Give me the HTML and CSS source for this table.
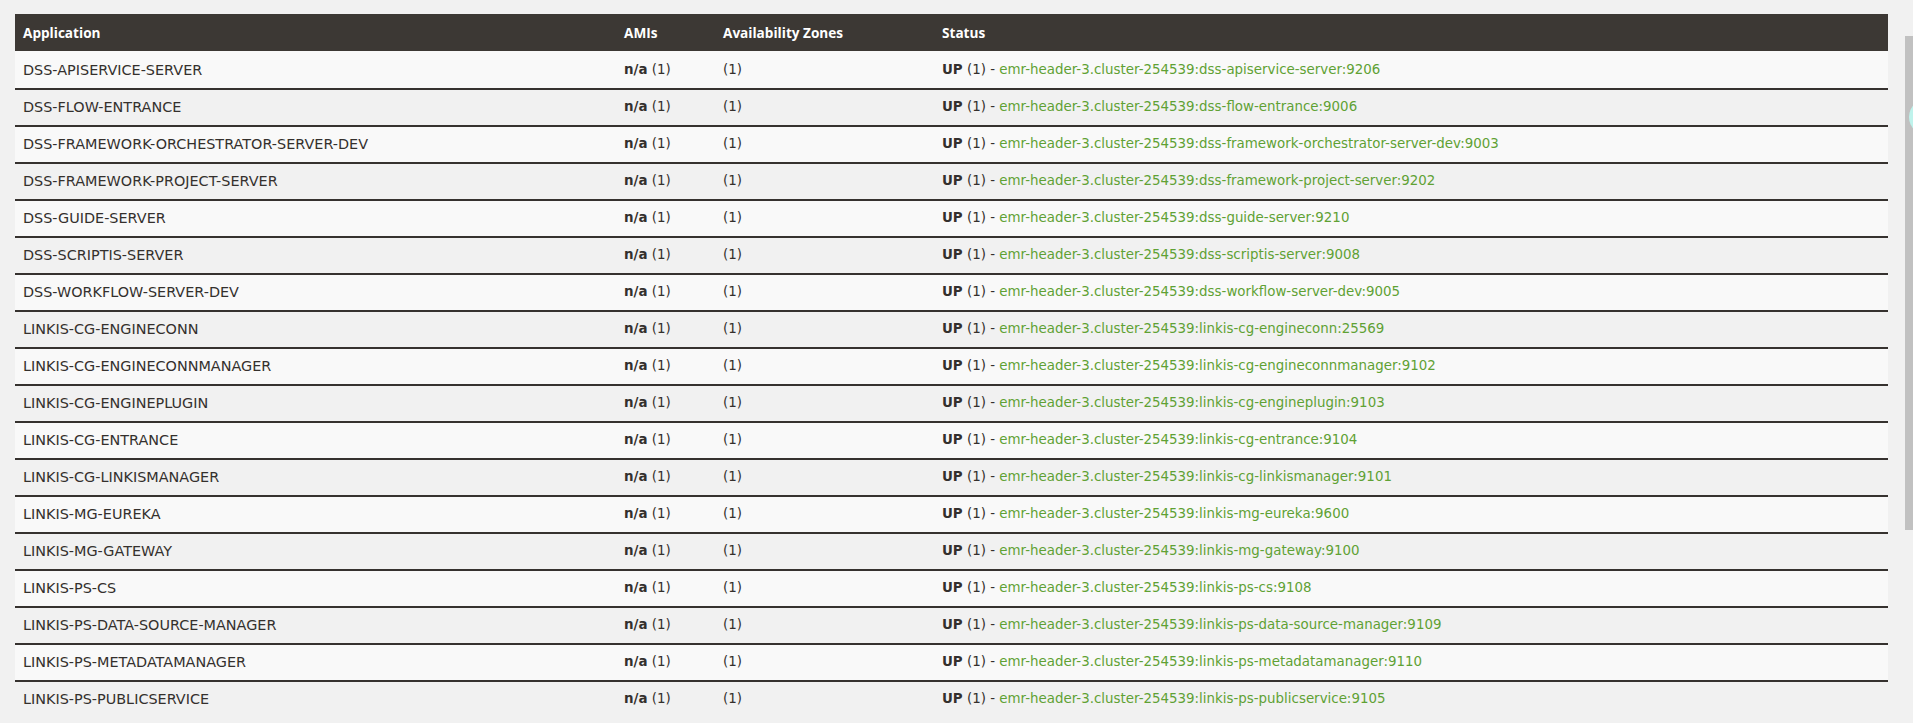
FILE: index.html
```html
<!DOCTYPE html>
<html>
<head>
<meta charset="utf-8">
<link rel="stylesheet" href="styles.css">
</head>
<body>
<div class="page">
<table class="apps">
<thead>
<tr><th class="c-app">Application</th><th class="c-ami">AMIs</th><th class="c-az">Availability Zones</th><th class="c-status">Status</th></tr>
</thead>
<tbody>
<tr><td>DSS-APISERVICE-SERVER</td><td><b>n/a</b> (1)</td><td>(1)</td><td><b>UP</b> (1) - <a>emr-header-3.cluster-254539:dss-apiservice-server:9206</a></td></tr>
<tr><td>DSS-FLOW-ENTRANCE</td><td><b>n/a</b> (1)</td><td>(1)</td><td><b>UP</b> (1) - <a>emr-header-3.cluster-254539:dss-flow-entrance:9006</a></td></tr>
<tr><td>DSS-FRAMEWORK-ORCHESTRATOR-SERVER-DEV</td><td><b>n/a</b> (1)</td><td>(1)</td><td><b>UP</b> (1) - <a>emr-header-3.cluster-254539:dss-framework-orchestrator-server-dev:9003</a></td></tr>
<tr><td>DSS-FRAMEWORK-PROJECT-SERVER</td><td><b>n/a</b> (1)</td><td>(1)</td><td><b>UP</b> (1) - <a>emr-header-3.cluster-254539:dss-framework-project-server:9202</a></td></tr>
<tr><td>DSS-GUIDE-SERVER</td><td><b>n/a</b> (1)</td><td>(1)</td><td><b>UP</b> (1) - <a>emr-header-3.cluster-254539:dss-guide-server:9210</a></td></tr>
<tr><td>DSS-SCRIPTIS-SERVER</td><td><b>n/a</b> (1)</td><td>(1)</td><td><b>UP</b> (1) - <a>emr-header-3.cluster-254539:dss-scriptis-server:9008</a></td></tr>
<tr><td>DSS-WORKFLOW-SERVER-DEV</td><td><b>n/a</b> (1)</td><td>(1)</td><td><b>UP</b> (1) - <a>emr-header-3.cluster-254539:dss-workflow-server-dev:9005</a></td></tr>
<tr><td>LINKIS-CG-ENGINECONN</td><td><b>n/a</b> (1)</td><td>(1)</td><td><b>UP</b> (1) - <a>emr-header-3.cluster-254539:linkis-cg-engineconn:25569</a></td></tr>
<tr><td>LINKIS-CG-ENGINECONNMANAGER</td><td><b>n/a</b> (1)</td><td>(1)</td><td><b>UP</b> (1) - <a>emr-header-3.cluster-254539:linkis-cg-engineconnmanager:9102</a></td></tr>
<tr><td>LINKIS-CG-ENGINEPLUGIN</td><td><b>n/a</b> (1)</td><td>(1)</td><td><b>UP</b> (1) - <a>emr-header-3.cluster-254539:linkis-cg-engineplugin:9103</a></td></tr>
<tr><td>LINKIS-CG-ENTRANCE</td><td><b>n/a</b> (1)</td><td>(1)</td><td><b>UP</b> (1) - <a>emr-header-3.cluster-254539:linkis-cg-entrance:9104</a></td></tr>
<tr><td>LINKIS-CG-LINKISMANAGER</td><td><b>n/a</b> (1)</td><td>(1)</td><td><b>UP</b> (1) - <a>emr-header-3.cluster-254539:linkis-cg-linkismanager:9101</a></td></tr>
<tr><td>LINKIS-MG-EUREKA</td><td><b>n/a</b> (1)</td><td>(1)</td><td><b>UP</b> (1) - <a>emr-header-3.cluster-254539:linkis-mg-eureka:9600</a></td></tr>
<tr><td>LINKIS-MG-GATEWAY</td><td><b>n/a</b> (1)</td><td>(1)</td><td><b>UP</b> (1) - <a>emr-header-3.cluster-254539:linkis-mg-gateway:9100</a></td></tr>
<tr><td>LINKIS-PS-CS</td><td><b>n/a</b> (1)</td><td>(1)</td><td><b>UP</b> (1) - <a>emr-header-3.cluster-254539:linkis-ps-cs:9108</a></td></tr>
<tr><td>LINKIS-PS-DATA-SOURCE-MANAGER</td><td><b>n/a</b> (1)</td><td>(1)</td><td><b>UP</b> (1) - <a>emr-header-3.cluster-254539:linkis-ps-data-source-manager:9109</a></td></tr>
<tr><td>LINKIS-PS-METADATAMANAGER</td><td><b>n/a</b> (1)</td><td>(1)</td><td><b>UP</b> (1) - <a>emr-header-3.cluster-254539:linkis-ps-metadatamanager:9110</a></td></tr>
<tr><td>LINKIS-PS-PUBLICSERVICE</td><td><b>n/a</b> (1)</td><td>(1)</td><td><b>UP</b> (1) - <a>emr-header-3.cluster-254539:linkis-ps-publicservice:9105</a></td></tr>
</tbody>
</table>
</div>
<div class="scroll-thumb"></div>
<div class="float-btn"></div>
</body>
</html>
```
FILE: styles.css
```css
html, body {
  margin: 0;
  padding: 0;
  background: #f1f1f1;
  overflow: hidden;
}
body {
  font-family: "DejaVu Sans", "Open Sans", sans-serif;
  font-size: 13.4px;
  color: #34302d;
}
.page {
  padding: 14px 25px 0 15px;
}
.apps {
  width: 1873px;
  border-collapse: separate;
  border-spacing: 0;
  table-layout: fixed;
}
.apps th {
  background: #3c3834;
  color: #fff;
  text-align: left;
  font-family: "Open Sans", sans-serif;
  font-weight: 700;
  font-size: 13.6px;
  padding: 8px 8px;
  line-height: 21px;
  height: 21px;
}
.c-app { width: 585px; }
.c-ami { width: 83px; }
.c-az { width: 203px; }
.apps td {
  padding: 7px 8px 8px;
  line-height: 20px;
  height: 20px;
  border-top: 2px solid #36322f;
  white-space: nowrap;
}
.apps td:first-child {
  font-size: 14.4px;
}
.apps tbody tr:first-child td {
  border-top: 0;
  padding-top: 9px;
  padding-bottom: 8px;
}
.apps tbody tr:nth-child(odd) td {
  background: #f9f9f9;
}
.apps tbody tr:nth-child(even) td {
  background: #f1f1f1;
}
.apps a {
  color: #5fa134;
  text-decoration: none;
}
.scroll-thumb {
  position: absolute;
  left: 1905px;
  top: 36px;
  width: 8px;
  height: 494px;
  background: #c1c1c1;
}
.float-btn {
  position: absolute;
  left: 1909px;
  top: 98px;
  width: 40px;
  height: 38px;
  border-radius: 50%;
  background: #bff3ec;
}
```
